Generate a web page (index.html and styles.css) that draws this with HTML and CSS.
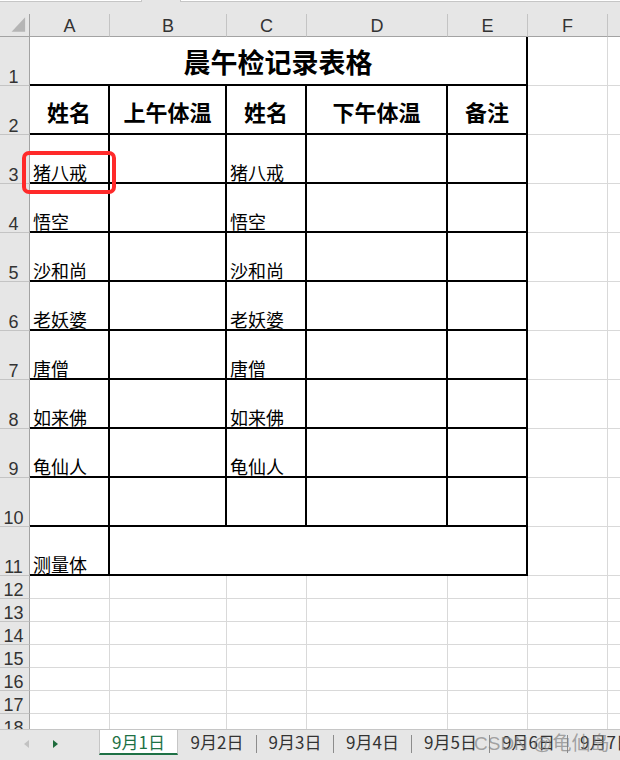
FILE: index.html
```html
<!DOCTYPE html>
<html lang="zh">
<head>
<meta charset="utf-8">
<title>晨午检记录表格</title>
<link rel="stylesheet" href="styles.css">
</head>
<body>
<div class="topbar"><div class="fbox fbox1"></div><div class="fbox fbox2"></div></div>
<div class="sheet">
  <div class="c corner"><svg width="30" height="23" viewBox="0 0 30 23"><polygon points="26,4 26,19 12,19" fill="#b5b5b5"/></svg></div>
  <div class="c ch">A</div><div class="c ch">B</div><div class="c ch">C</div><div class="c ch">D</div><div class="c ch">E</div><div class="c ch">F</div><div class="c ch last"></div>

  <div class="c rh">1</div><div class="c k title span5">晨午检记录表格</div><div class="c"></div><div class="c last"></div>

  <div class="c rh">2</div><div class="c k h">姓名</div><div class="c k h">上午体温</div><div class="c k h">姓名</div><div class="c k h">下午体温</div><div class="c k h">备注</div><div class="c"></div><div class="c last"></div>

  <div class="c rh">3</div><div class="c k d">猪八戒</div><div class="c k"></div><div class="c k d">猪八戒</div><div class="c k"></div><div class="c k"></div><div class="c"></div><div class="c last"></div>
  <div class="c rh">4</div><div class="c k d">悟空</div><div class="c k"></div><div class="c k d">悟空</div><div class="c k"></div><div class="c k"></div><div class="c"></div><div class="c last"></div>
  <div class="c rh">5</div><div class="c k d">沙和尚</div><div class="c k"></div><div class="c k d">沙和尚</div><div class="c k"></div><div class="c k"></div><div class="c"></div><div class="c last"></div>
  <div class="c rh">6</div><div class="c k d">老妖婆</div><div class="c k"></div><div class="c k d">老妖婆</div><div class="c k"></div><div class="c k"></div><div class="c"></div><div class="c last"></div>
  <div class="c rh">7</div><div class="c k d">唐僧</div><div class="c k"></div><div class="c k d">唐僧</div><div class="c k"></div><div class="c k"></div><div class="c"></div><div class="c last"></div>
  <div class="c rh">8</div><div class="c k d">如来佛</div><div class="c k"></div><div class="c k d">如来佛</div><div class="c k"></div><div class="c k"></div><div class="c"></div><div class="c last"></div>
  <div class="c rh">9</div><div class="c k d">龟仙人</div><div class="c k"></div><div class="c k d">龟仙人</div><div class="c k"></div><div class="c k"></div><div class="c"></div><div class="c last"></div>
  <div class="c rh">10</div><div class="c k"></div><div class="c k"></div><div class="c k"></div><div class="c k"></div><div class="c k"></div><div class="c"></div><div class="c last"></div>
  <div class="c rh">11</div><div class="c k d">测量体</div><div class="c k span4"></div><div class="c"></div><div class="c last"></div>

  <div class="c rh">12</div><div class="c"></div><div class="c"></div><div class="c"></div><div class="c"></div><div class="c"></div><div class="c"></div><div class="c last"></div>
  <div class="c rh">13</div><div class="c"></div><div class="c"></div><div class="c"></div><div class="c"></div><div class="c"></div><div class="c"></div><div class="c last"></div>
  <div class="c rh">14</div><div class="c"></div><div class="c"></div><div class="c"></div><div class="c"></div><div class="c"></div><div class="c"></div><div class="c last"></div>
  <div class="c rh">15</div><div class="c"></div><div class="c"></div><div class="c"></div><div class="c"></div><div class="c"></div><div class="c"></div><div class="c last"></div>
  <div class="c rh">16</div><div class="c"></div><div class="c"></div><div class="c"></div><div class="c"></div><div class="c"></div><div class="c"></div><div class="c last"></div>
  <div class="c rh">17</div><div class="c"></div><div class="c"></div><div class="c"></div><div class="c"></div><div class="c"></div><div class="c"></div><div class="c last"></div>
  <div class="c rh">18</div><div class="c"></div><div class="c"></div><div class="c"></div><div class="c"></div><div class="c"></div><div class="c"></div><div class="c last"></div>
</div>
<div class="mark"></div>
<div class="tabbar">
  <div class="nav">
    <svg width="99" height="25" viewBox="0 0 99 25"><polygon points="29,10 29,18 24,14" fill="#c2c2c2"/><polygon points="53,10 53,18 58,14" fill="#1e6b3c"/></svg>
  </div>
  <div class="tab active">9月1日</div>
  <div class="tab w78">9月2日</div><i class="sep"></i>
  <div class="tab w76">9月3日</div><i class="sep"></i>
  <div class="tab">9月4日</div><i class="sep"></i>
  <div class="tab">9月5日</div><i class="sep"></i>
  <div class="tab">9月6日</div><i class="sep"></i>
  <div class="tab">9月7日</div>
  <div class="wm">CSDN @龟仙岛</div>
</div>
</body>
</html>
```
FILE: styles.css
```css
html, body {
  margin: 0;
  padding: 0;
}
body {
  width: 620px;
  height: 760px;
  overflow: hidden;
  background: #ffffff;
  font-family: "Noto Sans CJK SC", "Noto Sans", sans-serif;
  color: #000;
  position: relative;
}
.topbar {
  height: 14px;
  background: #e6e6e6;
  display: flex;
  gap: 38px;
  box-sizing: border-box;
}
.fbox {
  height: 2px;
  background: #ffffff;
  border-bottom: 1px solid #c6c6c6;
  box-sizing: border-box;
}
.fbox1 {
  width: 142px;
  border-right: 1px solid #c6c6c6;
}
.fbox2 {
  flex: 1;
  border-left: 1px solid #c6c6c6;
}
.sheet {
  display: grid;
  grid-template-columns: 30px 80px 117px 80px 141px 80px 80px 12px;
  grid-template-rows: 23px repeat(11, 49px) repeat(7, 23px);
  height: 715px;
  overflow: hidden;
}
.c {
  box-sizing: border-box;
  border-right: 1px solid #d9d9d9;
  border-bottom: 1px solid #d9d9d9;
  display: flex;
  align-items: flex-end;
  min-width: 0;
  overflow: hidden;
  white-space: nowrap;
}
.c.last {
  border-right: none;
}
.corner {
  background: #e6e6e6;
  border-right-color: #a3a3a3;
  border-bottom-color: #a3a3a3;
}
.ch {
  background: #e6e6e6;
  border-right-color: #c4c4c4;
  border-bottom-color: #a3a3a3;
  justify-content: center;
  align-items: center;
  padding-top: 2px;
  font-family: "Liberation Sans", sans-serif;
  font-size: 18px;
  line-height: 22px;
  color: #333;
}
.rh {
  background: #e6e6e6;
  border-right-color: #a3a3a3;
  border-bottom-color: #c4c4c4;
  justify-content: center;
  padding-right: 2px;
  font-family: "Liberation Sans", sans-serif;
  font-size: 18px;
  line-height: 16px;
  color: #333;
}
.k {
  border-right: 2px solid #000;
  border-bottom: 2px solid #000;
}
.span5 {
  grid-column: span 5;
}
.span4 {
  grid-column: span 4;
}
.title {
  justify-content: center;
  align-items: center;
  font-size: 27px;
  font-weight: 700;
  line-height: 1;
  padding-top: 2px;
}
.h {
  justify-content: center;
  align-items: center;
  font-size: 22px;
  font-weight: 700;
  line-height: 1;
  padding-top: 2px;
}
.d {
  font-size: 18px;
  line-height: 1;
  padding: 0 0 1px 3px;
}
.mark {
  position: absolute;
  left: 22px;
  top: 151px;
  width: 94px;
  height: 43px;
  box-sizing: border-box;
  border: 4px solid #ff2a2a;
  border-radius: 7px;
}
.tabbar {
  position: relative;
  height: 31px;
  box-sizing: border-box;
  background: #e6e6e6;
  border-top: 1px solid #c6c6c6;
  display: flex;
  align-items: flex-start;
  font-size: 17px;
  color: #333;
}
.nav {
  width: 99px;
  height: 25px;
  flex: none;
}
.nav svg {
  display: block;
}
.tab {
  width: 77px;
  height: 25px;
  flex: none;
  display: flex;
  align-items: center;
  justify-content: center;
  line-height: 1;
  padding-bottom: 2px;
  box-sizing: border-box;
}
.tab.w78 {
  width: 78px;
}
.tab.w76 {
  width: 76px;
}
.tab.active {
  width: 79px;
  background: #ffffff;
  color: #1e7145;
  border-left: 1px solid #c6c6c6;
  border-right: 1px solid #c6c6c6;
  border-bottom: 2px solid #1e7145;
  padding-bottom: 0;
}
.sep {
  display: block;
  flex: none;
  width: 1px;
  height: 18px;
  margin-top: 5px;
  background: #8c8c8c;
}
.wm {
  position: absolute;
  left: 474px;
  top: 2px;
  font-family: "Liberation Sans", "Noto Sans CJK SC", sans-serif;
  font-size: 19px;
  line-height: 24px;
  color: rgba(130, 130, 130, 0.7);
  white-space: nowrap;
  pointer-events: none;
}
```
